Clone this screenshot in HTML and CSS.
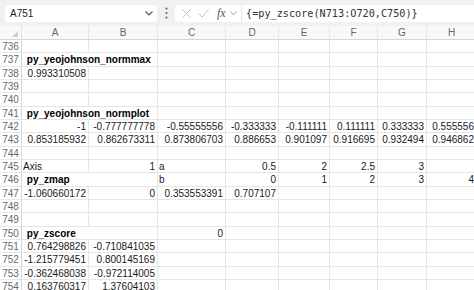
FILE: index.html
```
<!DOCTYPE html>
<html lang="en">
<head>
<meta charset="UTF-8">
<title>Sheet</title>
<link rel="stylesheet" href="styles.css">
</head>
<body>

<div class="toolbar">
    <div class="namebox">
        <span>A751</span>
        <svg class="chev" width="8" height="5" viewBox="0 0 8 5"><polyline points="0.5,0.5 4,4 7.5,0.5" fill="none" stroke="#555" stroke-width="1.1"/></svg>
    </div>
    <svg class="grip" width="3" height="12" viewBox="0 0 3 12"><circle cx="1.5" cy="1.5" r="1.1" fill="#666"/><circle cx="1.5" cy="6" r="1.1" fill="#666"/><circle cx="1.5" cy="10.5" r="1.1" fill="#666"/></svg>
    <div class="fxbox">
        <svg width="9" height="9" viewBox="0 0 9 9"><path d="M0.5,0.5 L8.5,8.5 M8.5,0.5 L0.5,8.5" stroke="#c2c2c2" stroke-width="1" fill="none"/></svg>
        <svg width="11" height="9" viewBox="0 0 11 9"><polyline points="0.5,4.5 4,8 10.5,0.5" stroke="#c2c2c2" stroke-width="1" fill="none"/></svg>
        <span class="fx">fx</span>
        <svg width="7" height="5" viewBox="0 0 7 5"><polyline points="0.5,0.5 3.5,3.8 6.5,0.5" fill="none" stroke="#999" stroke-width="1"/></svg>
    </div>
    <div class="formula">{=py_zscore(N713:O720,C750)}</div>
</div>

<div class="sheet" id="sheet"></div>

<script>
    // "*" = negrito (ocupa 2 colunas), "<" = texto a esquerda, resto = numero a direita
    var letras = ['A', 'B', 'C', 'D', 'E', 'F', 'G', 'H'];
    var dados = {
        737: ['* py_yeojohnson_normmax'],
        738: ['0.993310508'],
        741: ['* py_yeojohnson_normplot'],
        742: ['-1', '-0.777777778', '-0.55555556', '-0.333333', '-0.111111', '0.111111', '0.333333', '0.555556'],
        743: ['0.853185932', '0.862673311', '0.873806703', '0.886653', '0.901097', '0.916695', '0.932494', '0.946862'],
        745: ['<Axis', '1', '<a', '0.5', '2', '2.5', '3', ''],
        746: ['* py_zmap', '', '<b', '0', '1', '2', '3', '4'],
        747: ['-1.060660172', '0', '0.353553391', '0.707107'],
        750: ['* py_zscore', '<Axis', '0'],
        751: ['0.764298826', '-0.710841035'],
        752: ['-1.215779451', '0.800145169'],
        753: ['-0.362468038', '-0.972114005'],
        754: ['0.163760317', '1.37604103']
    };

    var sheet = document.getElementById('sheet');

    function celula(classe, texto) {
        var div = document.createElement('div');
        div.className = classe;
        div.textContent = texto;
        sheet.appendChild(div);
        return div;
    }

    // cabecalho das colunas
    celula('corner', '');
    letras.forEach(function(l) {
        celula('colhead', l);
    });

    for (var r = 736; r <= 754; r++) {
        celula('rowhead', r);
        var linha = dados[r] || [];
        for (var c = 0; c < letras.length; c++) {
            var t = linha[c] || '';
            if (t.charAt(0) === '*') {
                var cel = celula('cell bold', t.slice(1));
                cel.style.gridColumn = 'span 2';
                c++;
            } else if (t.charAt(0) === '<') {
                celula('cell', t.slice(1));
            } else {
                celula('cell num', t);
            }
        }
    }
</script>

</body>
</html>
```

FILE: styles.css
```
body {
    margin: 0;
    width: 474px;
    height: 290px;
    overflow: hidden;
    background-color: #fff;
    font-family: "Liberation Sans", Arial, sans-serif;
}

/* barra de formula */
.toolbar {
    height: 26px;
    background-color: #f1f1f1;
    display: flex;
    align-items: center;
    padding-left: 5px;
    box-sizing: border-box;
}

.namebox {
    width: 152px;
    height: 17px;
    background-color: #fff;
    border-radius: 3px;
    box-sizing: border-box;
    display: flex;
    align-items: center;
    justify-content: space-between;
    padding: 0 4px 0 5px;
    font-size: 10px;
    color: #222;
}

.chev {
    margin-top: 1px;
}

.grip {
    margin-left: 8px;
}

.fxbox {
    margin-left: 7px;
    height: 17px;
    width: 66px;
    background-color: #fff;
    border-radius: 3px 0 0 3px;
    display: flex;
    align-items: center;
    padding-left: 7px;
    gap: 7px;
    box-sizing: border-box;
}

.fx {
    font-family: "Liberation Serif", serif;
    font-style: italic;
    font-size: 12px;
    color: #555;
    margin-left: 1px;
    margin-right: -3px;
}

.formula {
    flex: 1;
    height: 17px;
    background-color: #fff;
    border-left: 1px solid #e6e6e6;
    box-sizing: border-box;
    padding-left: 4px;
    font-family: "DejaVu Sans Mono", monospace;
    font-size: 10.2px;
    line-height: 17px;
    color: #333;
    white-space: nowrap;
}

/* planilha */
.sheet {
    display: grid;
    grid-template-columns: 22px 67px 69px 68px 53px 51px 48px 49px 50px;
    grid-template-rows: 14px;
    grid-auto-rows: 13.333px;
    width: 477px;
}

.corner {
    position: relative;
    background-color: #f9f9f9;
    border-bottom: 1px solid #d6d6d6;
    border-right: 1px solid #e0e0e0;
}

.corner::after {
    content: "";
    position: absolute;
    right: 3px;
    bottom: 2px;
    border-style: solid;
    border-width: 0 0 6px 6px;
    border-color: transparent transparent #d0d0d0 transparent;
}

.colhead {
    background-color: #f9f9f9;
    border-bottom: 1px solid #d6d6d6;
    border-right: 1px solid #e6e6e6;
    font-size: 10px;
    line-height: 13px;
    text-align: center;
    color: #666;
}

.rowhead {
    border-bottom: 1px solid #e6e6e6;
    border-right: 1px solid #d6d6d6;
    font-size: 10px;
    line-height: 13px;
    text-align: center;
    color: #6a6a6a;
    overflow: hidden;
}

.cell {
    border-bottom: 1px solid #e6e6e6;
    border-right: 1px solid #e6e6e6;
    font-size: 10px;
    line-height: 13px;
    padding: 0 2px 0 1px;
    color: #1a1a1a;
    white-space: nowrap;
    overflow: hidden;
}

.num {
    text-align: right;
    padding-right: 2px;
}

.bold {
    font-weight: bold;
    color: #000;
    white-space: pre;
    padding-left: 2px;
}
```
